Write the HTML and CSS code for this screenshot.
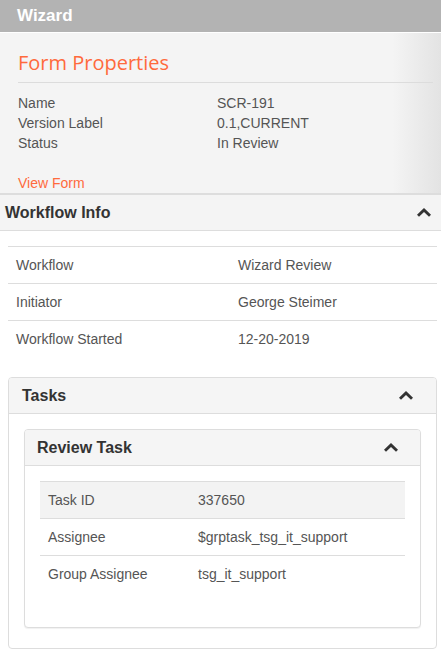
FILE: index.html
```html
<!DOCTYPE html>
<html>
<head>
<meta charset="utf-8">
<link rel="stylesheet" href="styles.css">
</head>
<body>
<div class="topbar">Wizard</div>
<div class="props">
  <h1 class="props-title">Form Properties</h1>
  <div class="props-grid">
    <div class="props-row"><span class="props-label">Name</span><span>SCR-191</span></div>
    <div class="props-row"><span class="props-label">Version Label</span><span>0.1,CURRENT</span></div>
    <div class="props-row"><span class="props-label">Status</span><span>In Review</span></div>
  </div>
  <a class="props-link">View Form</a>
</div>
<div class="section-head">
  <span>Workflow Info</span>
  <svg class="chev" viewBox="0 0 14 9" width="14" height="9"><path d="M7 0 L14 6.8 L12 8.8 L7 4 L2 8.8 L0 6.8 Z"/></svg>
</div>
<div class="section-body">
  <table class="info-table wf">
    <tr><td class="c1">Workflow</td><td>Wizard Review</td></tr>
    <tr><td class="c1">Initiator</td><td>George Steimer</td></tr>
    <tr><td class="c1">Workflow Started</td><td>12-20-2019</td></tr>
  </table>
  <div class="panel">
    <div class="panel-head tasks-head">
      <span>Tasks</span>
      <svg class="chev" viewBox="0 0 14 9" width="14" height="9"><path d="M7 0 L14 6.8 L12 8.8 L7 4 L2 8.8 L0 6.8 Z"/></svg>
    </div>
    <div class="panel-body">
      <div class="panel inner">
        <div class="panel-head review-head">
          <span>Review Task</span>
          <svg class="chev" viewBox="0 0 14 9" width="14" height="9"><path d="M7 0 L14 6.8 L12 8.8 L7 4 L2 8.8 L0 6.8 Z"/></svg>
        </div>
        <div class="panel-body">
          <table class="info-table task">
            <tr class="striped"><td class="c1">Task ID</td><td>337650</td></tr>
            <tr><td class="c1">Assignee</td><td>$grptask_tsg_it_support</td></tr>
            <tr><td class="c1">Group Assignee</td><td>tsg_it_support</td></tr>
          </table>
        </div>
      </div>
    </div>
  </div>
</div>
</body>
</html>
```

FILE: styles.css
```css
html, body {
  margin: 0;
  padding: 0;
  background: #ffffff;
  font-family: "Liberation Sans", Arial, sans-serif;
  font-size: 14px;
  color: #555555;
}

.topbar {
  height: 32px;
  line-height: 31px;
  background: #b3b3b3;
  color: #ffffff;
  font-weight: bold;
  font-size: 17px;
  padding-left: 17px;
  border-bottom: 1px solid #ffffff;
}

.props {
  background: linear-gradient(to right, #f4f4f4 0%, #f4f4f4 89%, #e3e3e3 100%);
  padding: 15px 8px 0 18px;
  height: 145px;
  border-bottom: 2px solid #dddddd;
  display: flex;
  flex-direction: column;
}

.props-title {
  margin: 0;
  font-family: "Open Sans", sans-serif;
  font-weight: normal;
  font-size: 20px;
  line-height: 30px;
  color: #ff6a3d;
  padding-bottom: 4px;
  border-bottom: 1px solid #dcdcdc;
}

.props-grid {
  margin-top: 10px;
  display: flex;
  flex-direction: column;
}

.props-row {
  display: flex;
  line-height: 20px;
  color: #555555;
}

.props-label {
  width: 199px;
  flex: none;
}

.props-link {
  margin-top: auto;
  line-height: 20px;
  color: #ff6a3d;
}

.section-head {
  height: 35px;
  background: #f4f4f4;
  border-bottom: 1px solid #dddddd;
  display: flex;
  align-items: center;
  justify-content: space-between;
  padding: 0 10px 0 5px;
  font-weight: bold;
  font-size: 16px;
  color: #333333;
}

.chev {
  fill: #333333;
  display: block;
}

.section-body {
  padding: 15px 4px 0 8px;
}

.info-table {
  width: 100%;
  border-collapse: collapse;
  table-layout: fixed;
  color: #555555;
}

.info-table td {
  border-top: 1px solid #dddddd;
  padding: 8px;
  line-height: 20px;
  height: 20px;
}

.wf .c1 {
  width: 206px;
}

.task .c1 {
  width: 134px;
}

.striped td {
  background: #f3f3f3;
}

.panel {
  margin-top: 20px;
  border: 1px solid #dddddd;
  border-radius: 4px;
  background: #ffffff;
}

.panel-head {
  height: 35px;
  background: #f5f5f5;
  border-bottom: 1px solid #dddddd;
  border-radius: 3px 3px 0 0;
  display: flex;
  align-items: center;
  justify-content: space-between;
  font-weight: bold;
  font-size: 16px;
  color: #333333;
}

.tasks-head {
  padding: 0 23px 0 13px;
}

.review-head {
  padding: 0 22px 0 12px;
}

.panel-body {
  padding: 15px 15px 20px 15px;
}

.panel.inner {
  margin-top: 0;
  box-shadow: 0 1px 1px rgba(0, 0, 0, 0.06);
}

.panel.inner .panel-body {
  padding: 15px 15px 35px 15px;
}
```
